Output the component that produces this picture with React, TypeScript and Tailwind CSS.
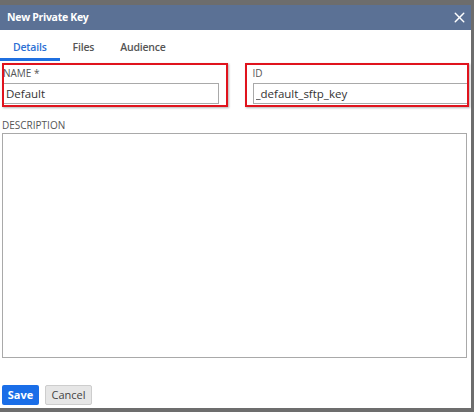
import { X } from 'lucide-react';

const tabs = ['Details', 'Files', 'Audience'];

function Field({ label, value }: { label: string; value: string }) {
  return (
    <div className="flex flex-col">
      <label className="h-[14px] text-[10px] leading-[14px] uppercase text-[#555]">{label}</label>
      <input
        readOnly
        value={value}
        className="mt-[3px] h-[21px] w-full border border-[#a9a9a9] px-[2px] text-[11.5px] text-[#333] outline-none"
      />
    </div>
  );
}

export default function App() {
  return (
    <div
      className="h-[412px] w-[474px] bg-[#6d6d6d] pt-[5px] pr-[3px] pb-[4px]"
      style={{ fontFamily: '"Open Sans", "Liberation Sans", sans-serif' }}
    >
      <div className="flex h-full flex-col bg-white">
        {/* Header */}
        <div className="flex h-[25px] items-center justify-between bg-[#5b7195] pl-[7px] pr-[3px]">
          <span className="text-[10.5px] font-bold tracking-[-0.3px] text-white">New Private Key</span>
          <X size={17} strokeWidth={2} className="text-white" />
        </div>

        {/* Tabs */}
        <div className="flex h-[31px]">
          {tabs.map((t, i) => (
            <div
              key={t}
              className={
                'px-[13px] pt-[10px] text-[10.5px] font-semibold leading-[14px] tracking-[-0.2px] ' +
                (i === 0 ? 'border-b-[3px] border-[#1f6fe0] text-[#2b6fd4]' : 'text-[#555]')
              }
            >
              {t}
            </div>
          ))}
        </div>

        {/* Fields */}
        <div className="relative grid grid-cols-2 gap-[34px] px-[3px] pt-[5px]">
          <Field label="Name *" value="Default" />
          <Field label="ID" value="_default_sftp_key" />
          {/* annotation boxes */}
          <div className="pointer-events-none absolute left-[2px] top-[2px] h-[44px] w-[226px] border-2 border-[#e0131d] shadow-[1px_1px_2px_rgba(0,0,0,0.3)]" />
          <div className="pointer-events-none absolute left-[245px] top-[2px] h-[44px] w-[224px] border-2 border-[#e0131d] shadow-[1px_1px_2px_rgba(0,0,0,0.3)]" />
        </div>

        {/* Description */}
        <div className="mt-[14px] flex flex-col px-[2px]">
          <label className="h-[14px] text-[10px] leading-[14px] uppercase text-[#555]">Description</label>
          <textarea
            readOnly
            className="mt-[1px] h-[225px] w-[465px] resize-none border border-[#a9a9a9] outline-none"
          />
        </div>

        {/* Buttons */}
        <div className="mt-[27px] flex gap-[6px] px-[2px]">
          <button className="h-[20px] w-[37px] rounded-[2px] bg-[#1a6ee8] text-[11px] font-bold text-white">
            Save
          </button>
          <button className="h-[20px] w-[47px] rounded-[2px] border border-[#cdcdcd] bg-[#e6e6e6] text-[11px] text-[#444]">
            Cancel
          </button>
        </div>
      </div>
    </div>
  );
}
